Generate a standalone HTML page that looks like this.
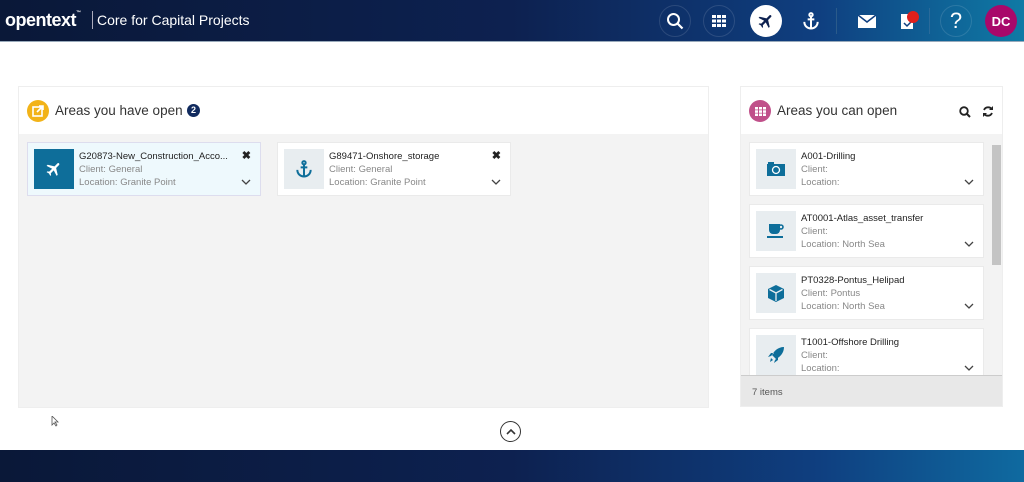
<!DOCTYPE html>
<html><head><style>
*{box-sizing:border-box;margin:0;padding:0}
body{width:1024px;height:482px;position:relative;background:#fff;font-family:"Liberation Sans",sans-serif;overflow:hidden;color:#333}
.hdr{position:absolute;left:0;top:0;width:1024px;height:42px;background:linear-gradient(90deg,#0a1838 0%,#0d2150 50%,#0f3f80 80%,#0f7aa5 100%);border-bottom:1px solid #9ab}
.logo{position:absolute;left:5px;top:10px;color:#fff;font-weight:bold;font-size:18px;letter-spacing:-0.5px}
.sub{position:absolute;left:92px;top:11px;color:#fff;font-size:14px;border-left:1px solid #aab;padding-left:4px;height:18px;line-height:18px}
.ib{position:absolute;top:5px;width:32px;height:32px;border-radius:50%;border:1px solid rgba(255,255,255,.12);display:flex;align-items:center;justify-content:center}
.ftr{position:absolute;left:0;top:450px;width:1024px;height:32px;background:linear-gradient(90deg,#0a1838 0%,#0d2150 50%,#0f3f80 80%,#0f6aa0 100%)}
.panel{position:absolute;background:#f3f3f3;border:1px solid #eee}
.ph{position:absolute;left:0;top:0;right:0;height:47px;background:#fff}
.pt{position:absolute;top:16px;font-size:13.5px;color:#333}
.card{position:absolute;width:234px;height:54px;background:#fff;border:1px solid #eaeaea}
.thumb{position:absolute;left:6px;top:6px;width:40px;height:40px;background:#e8edf0;display:flex;align-items:center;justify-content:center}
.t1{position:absolute;left:51px;top:8px;font-size:9.5px;color:#222}
.t2{position:absolute;left:51px;top:21px;font-size:9.5px;color:#888}
.t3{position:absolute;left:51px;top:34px;font-size:9.5px;color:#888}
.x{position:absolute;right:9px;top:6px;font-size:11px;font-weight:bold;color:#222}
.chev{position:absolute;right:9px;top:36px}
</style></head><body>
<div class="hdr">
<div class="logo">opentext<span style="font-size:5px;vertical-align:top">™</span></div>
<div class="sub">Core for Capital Projects</div>
<div class="ib" style="left:659px"><svg width="18" height="18" viewBox="0 0 18 18"><circle cx="7.5" cy="7.5" r="5.5" fill="none" stroke="#fff" stroke-width="2"/><path d="M11.5 11.5l5 5" stroke="#fff" stroke-width="2.2"/></svg></div>
<div class="ib" style="left:703px"><svg width="14" height="12"><g fill="#fff"><rect x="0" y="0" width="4" height="3"/><rect x="5" y="0" width="4" height="3"/><rect x="10" y="0" width="4" height="3"/><rect x="0" y="4.5" width="4" height="3"/><rect x="5" y="4.5" width="4" height="3"/><rect x="10" y="4.5" width="4" height="3"/><rect x="0" y="9" width="4" height="3"/><rect x="5" y="9" width="4" height="3"/><rect x="10" y="9" width="4" height="3"/></g></svg></div>
<div class="ib" style="left:750px;background:#fff"><svg width="18" height="18" viewBox="0 0 24 24"><path fill="#0d2150" d="M21 16v-2l-8-5V3.5a1.5 1.5 0 0 0-3 0V9l-8 5v2l8-2.5V19l-2 1.5V22l3.5-1 3.5 1v-1.5L13 19v-5.5z" transform="rotate(45 12 12)"/></svg></div>
<div class="ib" style="left:795px;border:none"><svg width="20" height="20" viewBox="0 0 24 24"><g fill="none" stroke="#fff" stroke-width="2.4"><circle cx="12" cy="4.5" r="2"/><path d="M12 6.5V21M8 10h8M4 13c0 5 4 8 8 8s8-3 8-8"/></g></svg></div>
<div style="position:absolute;left:836px;top:8px;width:1px;height:26px;background:#2a5a8a"></div>
<div class="ib" style="left:851px;border:none"><svg width="18" height="13"><rect x="0" y="0" width="18" height="13" fill="#fff"/><path d="M0 0l9 7 9-7" fill="none" stroke="#0f3f80" stroke-width="1.5"/></svg></div>
<div class="ib" style="left:893px;border:none"><svg width="22" height="22"><rect x="3" y="4" width="12" height="15" fill="#fff"/><path d="M6 13l3 3 6-6" stroke="#0f3f80" stroke-width="1.5" fill="none"/><circle cx="15" cy="7" r="6" fill="#e0201c"/></svg></div>
<div style="position:absolute;left:929px;top:8px;width:1px;height:26px;background:#2a6a9a"></div>
<div class="ib" style="left:940px;color:#fff;font-size:22px">?</div>
<div class="ib" style="left:985px;background:#a8086a;border:none;color:#fff;font-size:13px;font-weight:bold">DC</div>
</div>

<div class="panel" style="left:18px;top:86px;width:691px;height:322px">
<div class="ph">
<div style="position:absolute;left:8px;top:13px;width:22px;height:22px;border-radius:50%;background:#f2b318;display:flex;align-items:center;justify-content:center"><svg width="12" height="12"><rect x="1" y="2" width="9" height="9" fill="none" stroke="#fff" stroke-width="1.6"/><path d="M5 7l6-6M7 1h4v4" stroke="#fff" stroke-width="1.6" fill="none"/></svg></div>
<div class="pt" style="left:36px">Areas you have open</div>
<div style="position:absolute;left:168px;top:17px;width:13px;height:13px;border-radius:50%;background:#102a5e;color:#fff;font-size:9px;text-align:center;line-height:13px;font-weight:bold">2</div>
</div>
<div class="card" style="left:8px;top:55px;background:#eef9fd;border-color:#dde">
<div class="thumb" style="background:#0e6e9a"><svg width="18" height="18" viewBox="0 0 24 24"><path fill="#fff" d="M21 16v-2l-8-5V3.5a1.5 1.5 0 0 0-3 0V9l-8 5v2l8-2.5V19l-2 1.5V22l3.5-1 3.5 1v-1.5L13 19v-5.5z" transform="rotate(45 12 12)"/></svg></div>
<div class="t1">G20873-New_Construction_Acco...</div><div class="t2">Client: General</div><div class="t3">Location: Granite Point</div>
<div class="x">✖</div><svg class="chev" width="10" height="6"><path d="M1 1l4 4 4-4" stroke="#444" stroke-width="1.3" fill="none"/></svg></div>
<div class="card" style="left:258px;top:55px">
<div class="thumb"><svg width="20" height="20" viewBox="0 0 24 24"><g fill="none" stroke="#0e6e9a" stroke-width="2.4"><circle cx="12" cy="4.5" r="2"/><path d="M12 6.5V21M8 10h8M4 13c0 5 4 8 8 8s8-3 8-8"/></g></svg></div>
<div class="t1">G89471-Onshore_storage</div><div class="t2">Client: General</div><div class="t3">Location: Granite Point</div>
<div class="x">✖</div><svg class="chev" width="10" height="6"><path d="M1 1l4 4 4-4" stroke="#444" stroke-width="1.3" fill="none"/></svg></div>
</div>

<div class="panel" style="left:740px;top:86px;width:263px;height:321px">
<div class="ph">
<div style="position:absolute;left:8px;top:13px;width:22px;height:22px;border-radius:50%;background:#c0508a;display:flex;align-items:center;justify-content:center"><svg width="11" height="9"><g fill="#fff"><rect x="0" y="0" width="3" height="2.5"/><rect x="4" y="0" width="3" height="2.5"/><rect x="8" y="0" width="3" height="2.5"/><rect x="0" y="3.3" width="3" height="2.5"/><rect x="4" y="3.3" width="3" height="2.5"/><rect x="8" y="3.3" width="3" height="2.5"/><rect x="0" y="6.5" width="3" height="2.5"/><rect x="4" y="6.5" width="3" height="2.5"/><rect x="8" y="6.5" width="3" height="2.5"/></g></svg></div>
<div class="pt" style="left:36px">Areas you can open</div>
<svg style="position:absolute;left:218px;top:19px" width="12" height="12"><circle cx="5" cy="5" r="3.8" fill="none" stroke="#222" stroke-width="1.8"/><path d="M7.5 7.5l3.5 3.5" stroke="#222" stroke-width="2"/></svg>
<svg style="position:absolute;left:241px;top:18px" width="12" height="13" viewBox="0 0 12 13"><path d="M10 4.5A4.5 4.5 0 0 0 2 5M2 8.5A4.5 4.5 0 0 0 10 8" fill="none" stroke="#222" stroke-width="1.8"/><path d="M11 1v4H7zM1 12V8h4z" fill="#222"/></svg>
</div>
<div style="position:absolute;left:251px;top:58px;width:9px;height:120px;background:#c4c4c4"></div>
<div class="card" style="left:8px;top:55px;width:235px">
<div class="thumb"><svg width="18" height="14"><rect x="0" y="2" width="18" height="12" fill="#0e6e9a"/><rect x="1" y="0" width="6" height="3" fill="#0e6e9a"/><circle cx="9" cy="8" r="3.5" fill="none" stroke="#fff" stroke-width="1.3"/></svg></div>
<div class="t1">A001-Drilling</div><div class="t2">Client:</div><div class="t3">Location:</div>
<svg class="chev" width="10" height="6"><path d="M1 1l4 4 4-4" stroke="#444" stroke-width="1.3" fill="none"/></svg></div>
<div class="card" style="left:8px;top:117px;width:235px">
<div class="thumb"><svg width="18" height="14"><path d="M2 0h11v6a4 4 0 0 1-4 4H6a4 4 0 0 1-4-4z" fill="#0e6e9a"/><rect x="12" y="1" width="4" height="4" rx="2" fill="none" stroke="#0e6e9a" stroke-width="1.6"/><rect x="0" y="12" width="16" height="2" fill="#0e6e9a"/></svg></div>
<div class="t1">AT0001-Atlas_asset_transfer</div><div class="t2">Client:</div><div class="t3">Location: North Sea</div>
<svg class="chev" width="10" height="6"><path d="M1 1l4 4 4-4" stroke="#444" stroke-width="1.3" fill="none"/></svg></div>
<div class="card" style="left:8px;top:179px;width:235px">
<div class="thumb"><svg width="16" height="17" viewBox="0 0 16 17"><path d="M8 0l8 4v9l-8 4-8-4V4z" fill="#0e6e9a"/><path d="M1.5 4.5L8 8l6.5-3.5M8 8v8" stroke="#e8edf0" stroke-width="1.3" fill="none"/></svg></div>
<div class="t1">PT0328-Pontus_Helipad</div><div class="t2">Client: Pontus</div><div class="t3">Location: North Sea</div>
<svg class="chev" width="10" height="6"><path d="M1 1l4 4 4-4" stroke="#444" stroke-width="1.3" fill="none"/></svg></div>
<div style="position:absolute;left:8px;top:241px;width:235px;height:47px;overflow:hidden"><div class="card" style="left:0;top:0;width:235px">
<div class="thumb"><svg width="16" height="16" viewBox="0 0 16 16"><path d="M16 0C10 0 6 4 4 8l4 4c4-2 8-6 8-12zM3 9l-3 1 3-4 3 0zM7 13l-1 3 4-3 0-3zM3 11l2 2-3 2z" fill="#0e6e9a"/></svg></div>
<div class="t1">T1001-Offshore Drilling</div><div class="t2">Client:</div><div class="t3">Location:</div>
<svg class="chev" width="10" height="6"><path d="M1 1l4 4 4-4" stroke="#444" stroke-width="1.3" fill="none"/></svg></div></div>
<div style="position:absolute;left:0;top:288px;right:0;bottom:0;background:#e8e8e8;border-top:1px solid #ccc;font-size:9.5px;color:#555;padding:11px 0 0 11px">7 items</div>
</div>

<div style="position:absolute;left:500px;top:421px;width:21px;height:21px;border-radius:50%;border:1.5px solid #333;display:flex;align-items:center;justify-content:center"><svg width="10" height="6"><path d="M1 5l4-4 4 4" stroke="#333" stroke-width="1.6" fill="none"/></svg></div>
<svg style="position:absolute;left:51px;top:416px" width="8" height="11"><path d="M1 0v9l2-2 2 3 1-1-2-3h3z" fill="#fff" stroke="#555" stroke-width=".8"/></svg>
<div class="ftr"></div>
</body></html>
